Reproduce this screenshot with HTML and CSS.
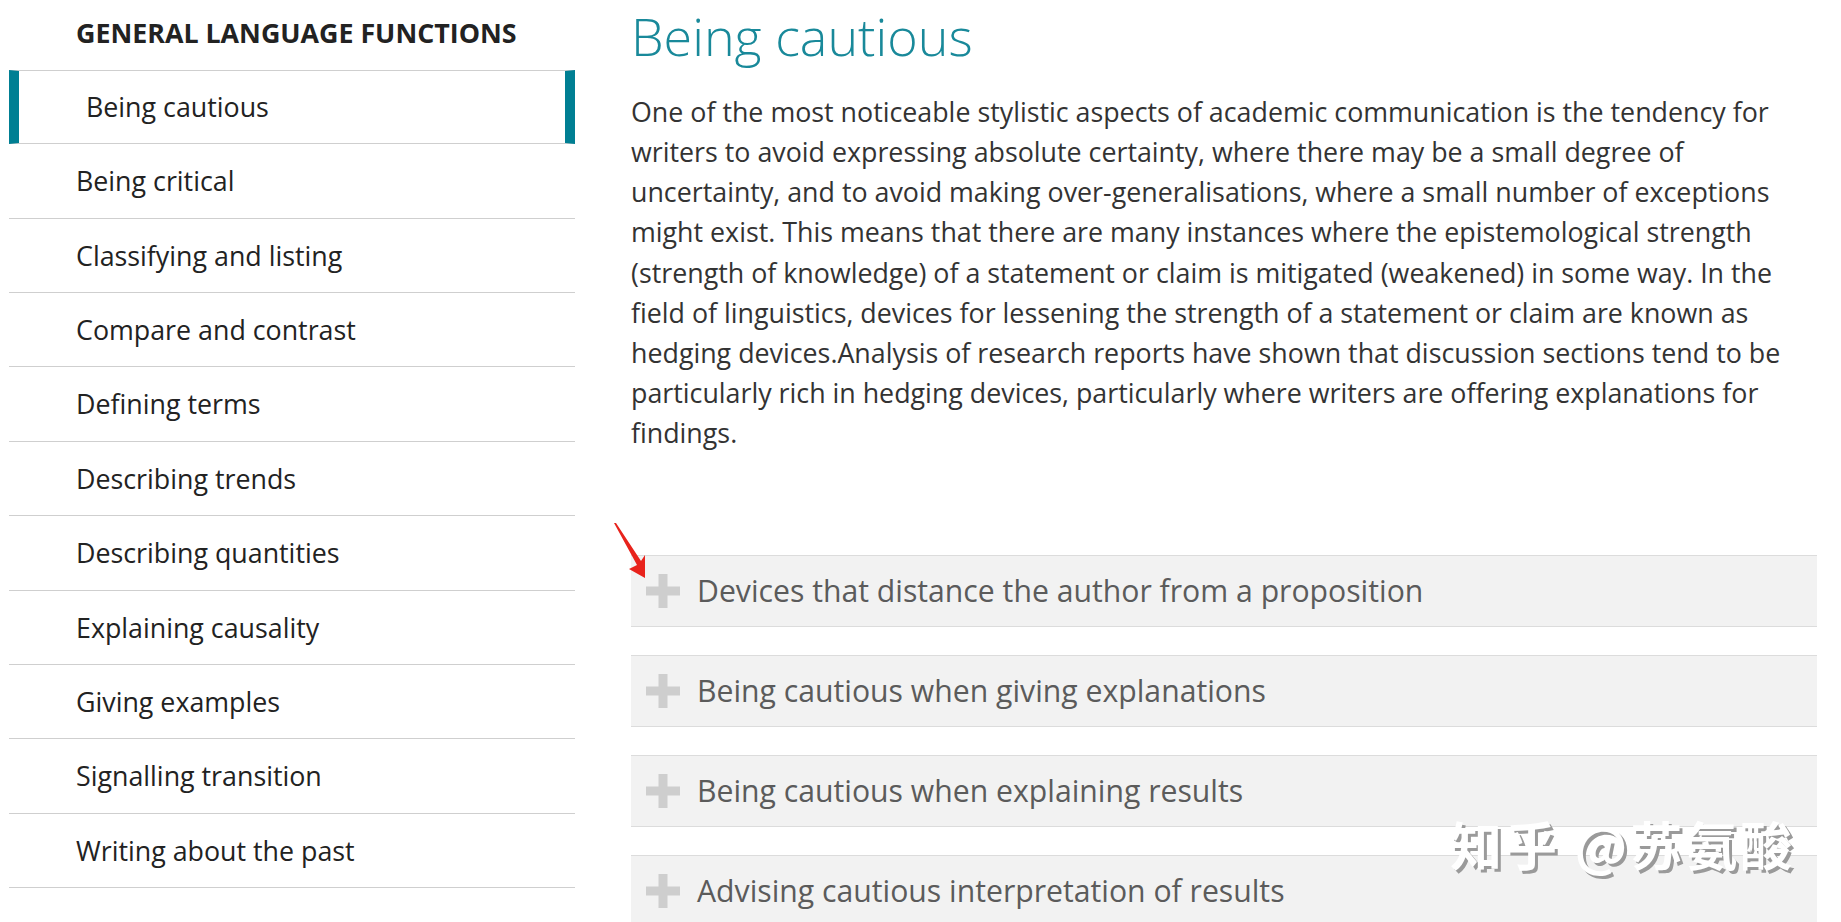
FILE: index.html
```html
<!DOCTYPE html>
<html lang="en">
<head>
<meta charset="utf-8">
<title>Being cautious</title>
<link rel="stylesheet" href="styles.css">
</head>
<body>
<div class="page">
  <nav class="sidebar">
    <h2 class="side-heading">GENERAL LANGUAGE FUNCTIONS</h2>
    <ul class="side-list">
      <li class="side-item active">Being cautious</li>
      <li class="side-item">Being critical</li>
      <li class="side-item">Classifying and listing</li>
      <li class="side-item">Compare and contrast</li>
      <li class="side-item">Defining terms</li>
      <li class="side-item">Describing trends</li>
      <li class="side-item">Describing quantities</li>
      <li class="side-item">Explaining causality</li>
      <li class="side-item">Giving examples</li>
      <li class="side-item">Signalling transition</li>
      <li class="side-item">Writing about the past</li>
    </ul>
  </nav>
  <main class="content">
    <h1 class="title">Being cautious</h1>
    <p class="intro">One of the most noticeable stylistic aspects of academic communication is the tendency for writers to avoid expressing absolute certainty, where there may be a small degree of uncertainty, and to avoid making over-generalisations, where a small number of exceptions might exist. This means that there are many instances where the epistemological strength (strength of knowledge) of a statement or claim is mitigated (weakened) in some way. In the field of linguistics, devices for lessening the strength of a statement or claim are known as hedging devices.Analysis of research reports have shown that discussion sections tend to be particularly rich in hedging devices, particularly where writers are offering explanations for findings.</p>
    <div class="accordion">
      <div class="acc-item">
        <svg class="plus" viewBox="0 0 34 34" width="34" height="34"><rect x="12.5" y="0" width="9" height="34"/><rect x="0" y="12.5" width="34" height="9"/></svg>
        <span class="acc-text">Devices that distance the author from a proposition</span>
      </div>
      <div class="acc-item">
        <svg class="plus" viewBox="0 0 34 34" width="34" height="34"><rect x="12.5" y="0" width="9" height="34"/><rect x="0" y="12.5" width="34" height="9"/></svg>
        <span class="acc-text">Being cautious when giving explanations</span>
      </div>
      <div class="acc-item">
        <svg class="plus" viewBox="0 0 34 34" width="34" height="34"><rect x="12.5" y="0" width="9" height="34"/><rect x="0" y="12.5" width="34" height="9"/></svg>
        <span class="acc-text">Being cautious when explaining results</span>
      </div>
      <div class="acc-item">
        <svg class="plus" viewBox="0 0 34 34" width="34" height="34"><rect x="12.5" y="0" width="9" height="34"/><rect x="0" y="12.5" width="34" height="9"/></svg>
        <span class="acc-text">Advising cautious interpretation of results</span>
      </div>
    </div>
  </main>
</div>
<svg class="arrow" viewBox="0 0 40 60" width="40" height="60"><polygon points="0,0 2,0 27,38 31,32 31,55 15,46 23,42"/></svg>
<div class="watermark">知乎 @苏氨酸</div>
</body>
</html>
```
FILE: styles.css
```css
html, body {
  margin: 0;
  padding: 0;
  background: #ffffff;
  overflow: hidden;
}
body {
  font-family: "Open Sans", "Liberation Sans", sans-serif;
  color: #222;
  width: 1841px;
  height: 922px;
  position: relative;
}
.page {
  display: flex;
  align-items: flex-start;
}
.sidebar {
  width: 566px;
  margin-left: 9px;
  flex: none;
}
.side-heading {
  margin: 0;
  height: 70px;
  line-height: 66px;
  padding-left: 67px;
  font-size: 26.8px;
  font-weight: 700;
  color: #222;
}
.side-list {
  list-style: none;
  margin: 0;
  padding: 0;
}
.side-item {
  height: 73.36px;
  line-height: 73.36px;
  padding-left: 67px;
  border-bottom: 1px solid #cfcfcf;
  font-size: 26.8px;
  color: #222;
}
.side-item.active {
  border-top: 1px solid #cfcfcf;
  border-left: 10px solid #007f93;
  border-right: 10px solid #007f93;
  height: 72.36px;
  line-height: 72.36px;
}
.content {
  margin-left: 56px;
  width: 1186px;
  flex: none;
}
.title {
  margin: 1px 0 0;
  font-size: 52px;
  font-weight: 300;
  line-height: 1.362;
  color: #19899a;
}
.intro {
  margin: 20px 0 101px;
  font-size: 26.8px;
  line-height: 40.2px;
  color: #333;
}
.accordion {
  display: flex;
  flex-direction: column;
  gap: 28px;
}
.acc-item {
  height: 70px;
  background: #f2f2f2;
  border-top: 1px solid #dcdcdc;
  border-bottom: 1px solid #dcdcdc;
  display: flex;
  align-items: center;
  padding-left: 15px;
}
.plus {
  fill: #cecece;
  flex: none;
}
.acc-text {
  margin-left: 17px;
  font-size: 30.2px;
  color: #5b5b5b;
}
.arrow {
  position: absolute;
  left: 614px;
  top: 523px;
  fill: #e8231c;
}
.watermark {
  position: absolute;
  left: 1450px;
  top: 806px;
  font-family: "Noto Sans CJK SC", sans-serif;
  font-weight: 700;
  font-size: 52px;
  color: #ffffff;
  text-shadow: 3px 3px 0 #9a9a9a;
  letter-spacing: 3px;
  white-space: nowrap;
}
```
